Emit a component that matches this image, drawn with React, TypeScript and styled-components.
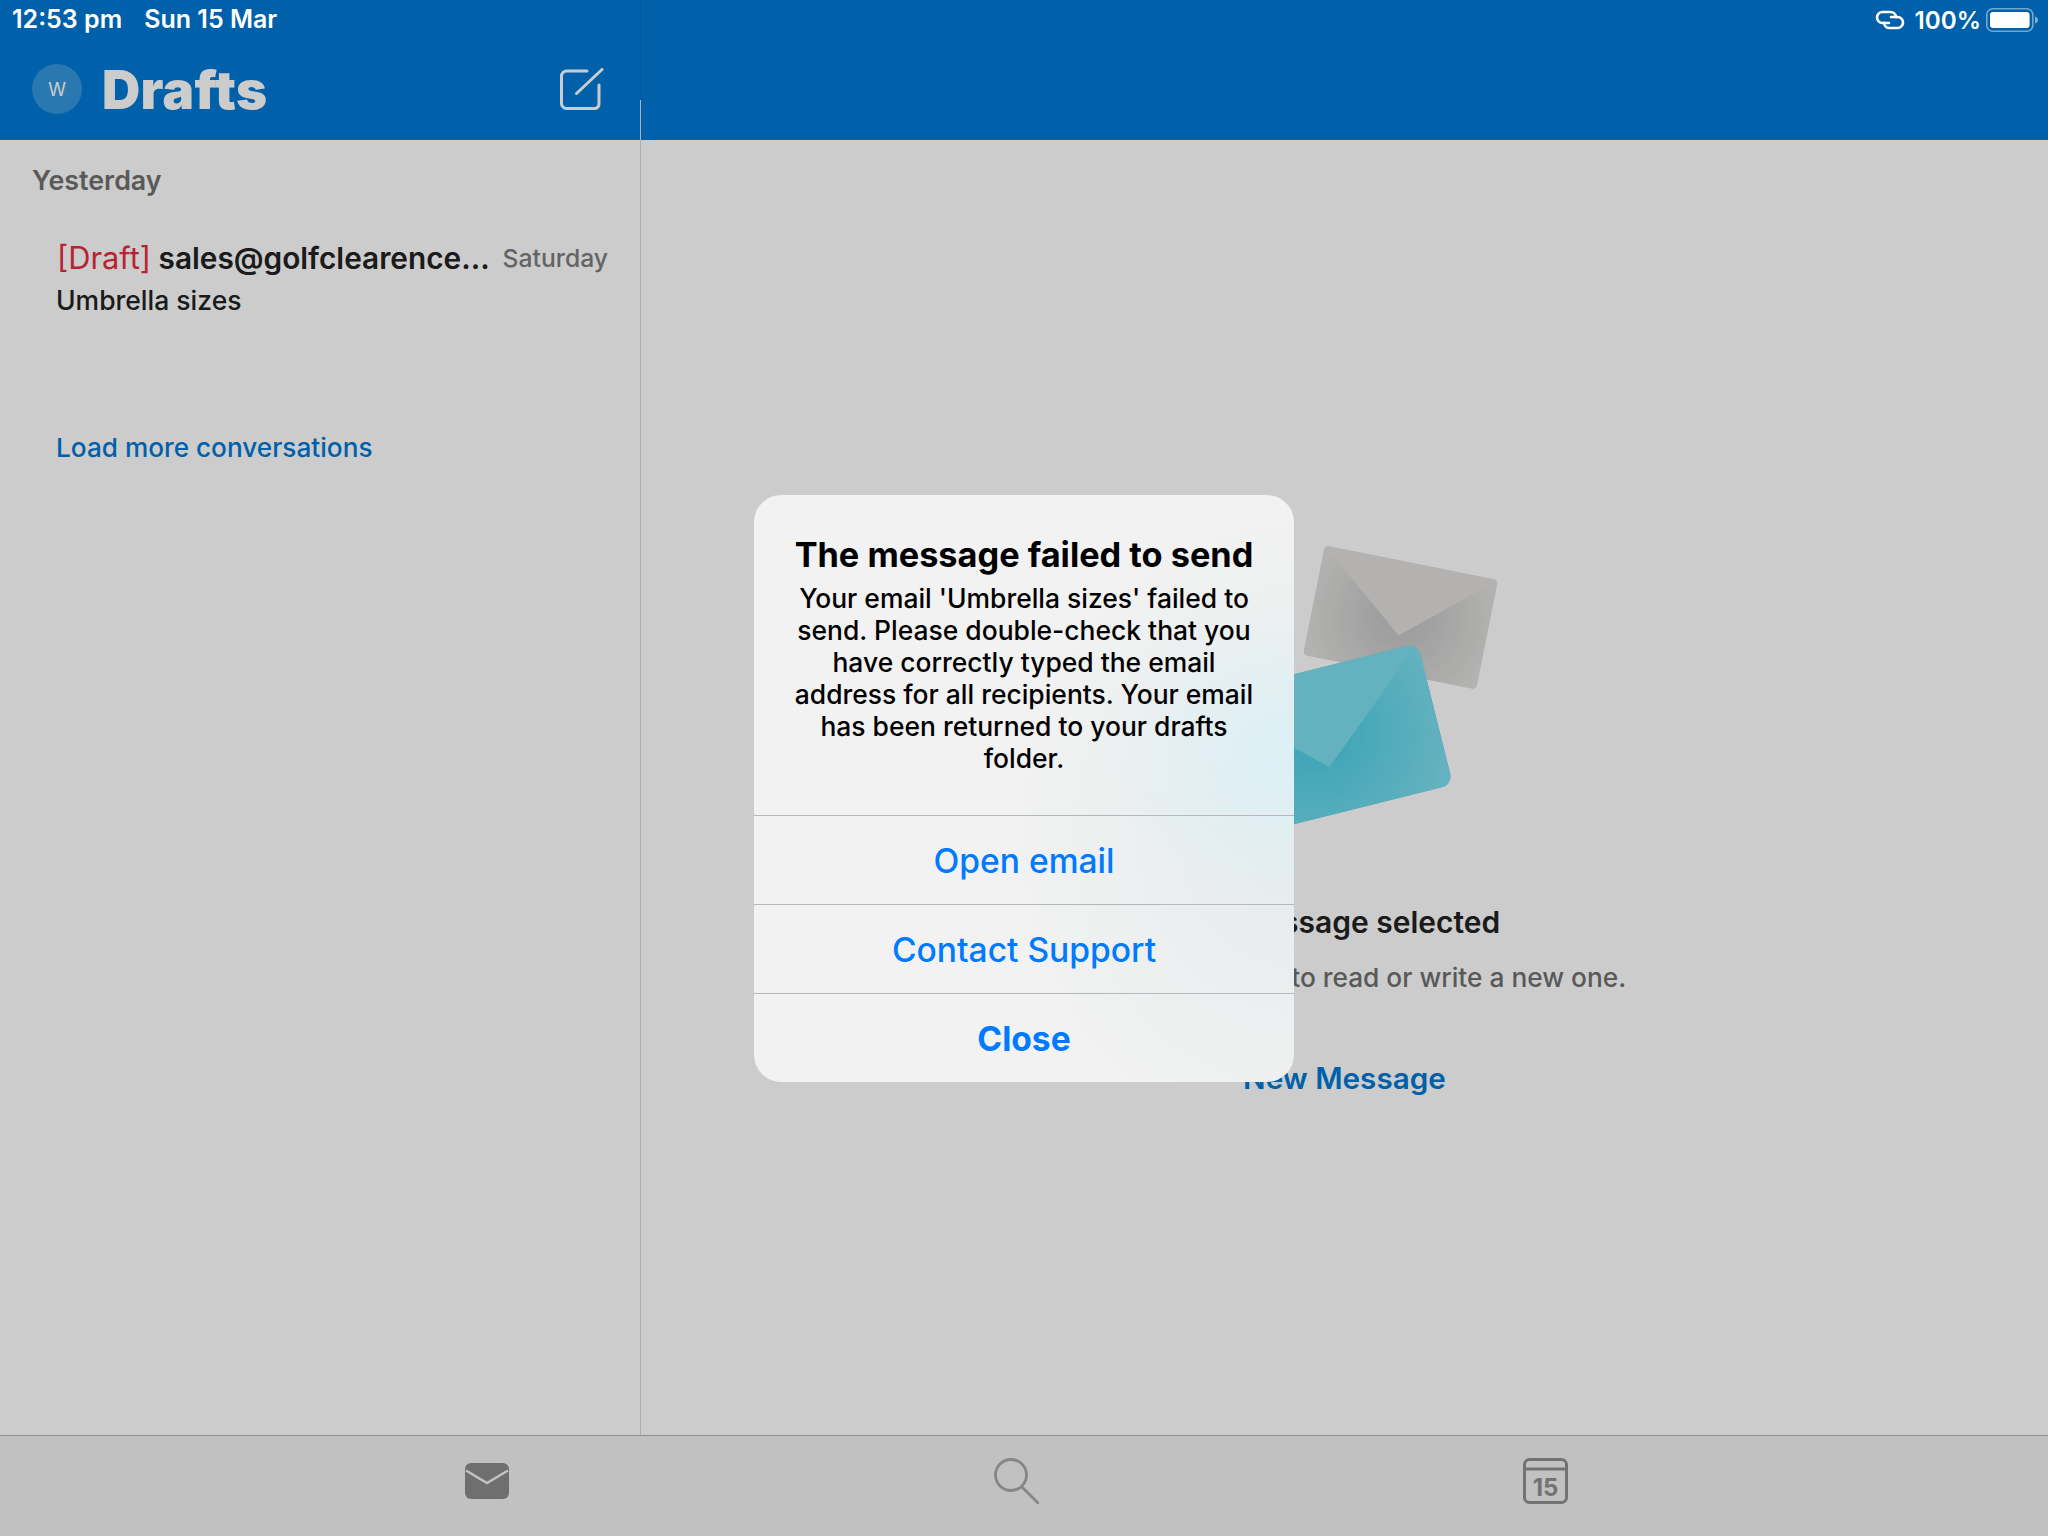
import React from 'react';
import styled, { createGlobalStyle } from 'styled-components';

const Global = createGlobalStyle`
  html, body { margin: 0; padding: 0; background: #fff; }
  body { font-family: Inter, "Noto Sans", "Liberation Sans", sans-serif; }
  #root { width: 2048px; height: 1536px; overflow: hidden; }
`;

const Page = styled.div`
  position: relative;
  width: 2048px;
  height: 1536px;
  display: flex;
  flex-direction: column;
  background: #fff;
  overflow: hidden;
`;

const StatusBar = styled.div`
  position: absolute;
  z-index: 30;
  top: 0;
  left: 0;
  right: 0;
  height: 40px;
  padding: 0 10px 0 12px;
  display: flex;
  align-items: flex-start;
  justify-content: space-between;
  color: #fff;
  font-size: 25px;
  font-weight: 600;
  line-height: 39px;
`;

const StatusLeft = styled.div`
  display: flex;
  gap: 22px;
`;

const StatusRight = styled.div`
  display: flex;
  align-items: center;
  height: 40px;
`;

const Percent = styled.span`
  margin: 0 5px 0 10px;
  font-size: 24.2px;
`;

const Main = styled.div`
  flex: 1;
  display: flex;
  min-height: 0;
`;

const Sidebar = styled.aside`
  width: 641px;
  flex: none;
  display: flex;
  flex-direction: column;
  border-right: 1px solid #dcdcdc;
  box-sizing: border-box;
`;

const SidebarHeader = styled.header`
  position: relative;
  height: 140px;
  box-sizing: border-box;
  margin-right: -1px;
  padding: 64px 36px 0 32px;
  background: #0078d4;
  border-right: 1px solid #006cbe;
  display: flex;
  align-items: flex-start;
  &::after {
    content: '';
    position: absolute;
    right: -1px;
    top: 100px;
    bottom: 0;
    width: 1px;
    background: #dcdcdc;
  }
`;

const Avatar = styled.div`
  width: 50px;
  height: 50px;
  flex: none;
  border-radius: 50%;
  background: #3596dd;
  color: #fff;
  font-size: 18px;
  font-weight: 400;
  display: flex;
  align-items: center;
  justify-content: center;
`;

const Title = styled.h1`
  flex: 1;
  margin: 1px 0 0 20px;
  color: #fff;
  font-size: 53px;
  font-weight: 900;
  letter-spacing: 0.3px;
  line-height: 50px;
`;

const ComposeButton = styled.div`
  width: 44px;
  height: 42px;
  margin-top: 4px;
  flex: none;
`;

const Section = styled.div`
  padding: 24px 25px 0 32px;
  color: #707070;
  font-size: 26.8px;
  font-weight: 600;
  line-height: 32px;
`;

const Conversation = styled.div`
  padding: 41.5px 32px 0 57px;
  display: flex;
  flex-direction: column;
`;

const ConversationTop = styled.div`
  display: flex;
  align-items: center;
  justify-content: space-between;
  line-height: 40px;
`;

const Sender = styled.span`
  color: #222;
  font-size: 29.8px;
  font-weight: 600;
  white-space: nowrap;
`;

const DraftTag = styled.span`
  color: #e62c3b;
  font-weight: 400;
  font-size: 30.8px;
`;

const DateText = styled.span`
  color: #7d7d7d;
  font-size: 24.7px;
  font-weight: 500;
`;

const Subject = styled.div`
  margin: 5px 0 0 -1px;
  color: #222;
  font-size: 26.5px;
  font-weight: 500;
  line-height: 34px;
`;

const LoadMore = styled.div`
  margin: 114.5px 0 0 56px;
  color: #0078d4;
  font-size: 26.2px;
  font-weight: 500;
  line-height: 34px;
`;

const DetailPane = styled.section`
  flex: 1;
  display: flex;
  flex-direction: column;
  align-items: center;
`;

const DetailHeader = styled.div`
  align-self: stretch;
  height: 140px;
  flex: none;
  background: #0078d4;
`;

const Illustration = styled.svg`
  display: block;
  width: 320px;
  height: 300px;
  margin-top: 400px;
  flex: none;
`;

const EmptyTitle = styled.div`
  margin-top: 62px;
  color: #222;
  font-size: 30px;
  font-weight: 600;
  line-height: 40px;
`;

const EmptyText = styled.div`
  margin-top: 18px;
  color: #707070;
  font-size: 26.3px;
  font-weight: 500;
  line-height: 36px;
`;

const NewMessage = styled.div`
  margin-top: 62px;
  color: #0078d4;
  font-size: 29.7px;
  font-weight: 600;
  line-height: 40px;
`;

const TabBar = styled.nav`
  height: 101px;
  flex: none;
  box-sizing: border-box;
  padding-left: 222px;
  background: #f2f2f2;
  border-top: 1px solid #b4b4b4;
  display: grid;
  grid-template-columns: repeat(3, 529.5px);
`;

const Tab = styled.div`
  display: flex;
  align-items: center;
  justify-content: center;
  padding-bottom: 11px;
`;

const Backdrop = styled.div`
  position: absolute;
  inset: 0;
  z-index: 20;
  padding-top: 41px;
  box-sizing: border-box;
  background: rgba(0, 0, 0, 0.2);
  display: flex;
  align-items: center;
  justify-content: center;
`;

const Alert = styled.div`
  width: 540px;
  border-radius: 27px;
  overflow: hidden;
  background:
    radial-gradient(190px 150px at 100% 262px, #dcf0f5 0%, rgba(220, 240, 245, 0.75) 35%, rgba(232, 240, 242, 0) 100%),
    radial-gradient(300px 340px at 100% 340px, rgba(228, 234, 236, 0.85) 0%, rgba(236, 238, 239, 0) 100%),
    #f2f2f2;
  text-align: center;
`;

const AlertContent = styled.div`
  padding: 39px 30px 41px;
`;

const AlertTitle = styled.h2`
  margin: 0 0 7px;
  color: #000;
  font-size: 34.3px;
  font-weight: 700;
  line-height: 41px;
`;

const AlertBody = styled.p`
  margin: 0;
  color: #000;
  font-size: 26.45px;
  font-weight: 500;
  line-height: 32px;
`;

const AlertButton = styled.div<{ $strong?: boolean }>`
  height: 88px;
  border-top: 1px solid #b5b8ba;
  display: flex;
  align-items: center;
  justify-content: center;
  color: #007aff;
  font-size: 33.6px;
  font-weight: ${(p) => (p.$strong ? 700 : 500)};
`;

const LinkIcon = () => (
  <svg width="30" height="20" viewBox="0 0 30 20" fill="none" stroke="#fff" strokeWidth="2.6" strokeLinecap="round">
    <path d="M14 13H7.5a5.5 5.5 0 0 1 0-11h8a5.5 5.5 0 0 1 5.5 5.2" />
    <path d="M16 7h6.5a5.5 5.5 0 0 1 0 11h-8A5.5 5.5 0 0 1 9 12.8" />
  </svg>
);

const BatteryIcon = () => (
  <svg width="52" height="24" viewBox="0 0 52 24">
    <rect x="0.8" y="0.8" width="46" height="22.4" rx="6" fill="none" stroke="#fff" strokeOpacity="0.45" strokeWidth="1.6" />
    <rect x="4" y="4" width="39.6" height="16" rx="3.2" fill="#fff" />
    <path d="M49 8.5c1.8.6 3 1.9 3 3.5s-1.2 2.9-3 3.5z" fill="#fff" fillOpacity="0.5" />
  </svg>
);

const ComposeIcon = () => (
  <svg width="44" height="42" viewBox="0 0 44 42" fill="none" stroke="#fff" strokeWidth="3" strokeLinecap="round" strokeLinejoin="round">
    <path d="M27 3H6.5a5 5 0 0 0-5 5v27.5a5 5 0 0 0 5 5H35a5 5 0 0 0 4-5V17" />
    <path d="M16.5 25.5 42 1.5" />
  </svg>
);

const MailIcon = () => (
  <svg width="44" height="36" viewBox="0 0 44 36">
    <rect x="0" y="0" width="44" height="36" rx="6" fill="#8b8b8b" />
    <path d="M1 7.5 22 20 43 7.5" fill="none" stroke="#f2f2f2" strokeWidth="2.6" />
  </svg>
);

const SearchIcon = () => (
  <svg width="45" height="46" viewBox="0 0 45 46" fill="none" stroke="#a8a8a8" strokeWidth="2.8" strokeLinecap="round">
    <circle cx="17" cy="17" r="15.5" />
    <path d="M28 29 44 45" />
  </svg>
);

const CalendarIcon = () => (
  <svg width="45" height="46" viewBox="0 0 45 46">
    <rect x="1.5" y="1.5" width="42" height="43" rx="5" fill="none" stroke="#8f8f8f" strokeWidth="3" />
    <path d="M1.5 11h42" stroke="#8f8f8f" strokeWidth="3" />
    <text x="22.5" y="37.5" textAnchor="middle" fontFamily="Inter, sans-serif" fontSize="24" fontWeight="700" fill="#8f8f8f">15</text>
  </svg>
);

const Envelopes = () => (
  <Illustration viewBox="1184 540 320 300">
    <defs>
      <radialGradient id="grayBody" gradientUnits="userSpaceOnUse" cx="0" cy="0" r="95">
        <stop offset="0" stopColor="#c4c4c4" />
        <stop offset="0.25" stopColor="#c8c8c8" />
        <stop offset="1" stopColor="#e0dfdd" />
      </radialGradient>
      <radialGradient id="tealBody" gradientUnits="userSpaceOnUse" cx="-10" cy="-10" r="130">
        <stop offset="0.2" stopColor="#52d0e6" />
        <stop offset="1" stopColor="#7ddeef" />
      </radialGradient>
      <clipPath id="grayClip">
        <rect x="-88.5" y="-56" width="177" height="112" rx="5" />
      </clipPath>
      <clipPath id="tealClip">
        <rect x="-112" y="-73" width="224" height="146" rx="12" />
      </clipPath>
    </defs>
    <g transform="translate(1399.5 617.5) rotate(11.3)" clipPath="url(#grayClip)">
      <rect x="-88.5" y="-56" width="177" height="112" fill="url(#grayBody)" />
      <path d="M-88.5 -56H88.5L1.6 18Z" fill="#e0dfdd" />
    </g>
    <g transform="translate(1326 741) rotate(-14)" clipPath="url(#tealClip)">
      <rect x="-112" y="-73" width="224" height="146" fill="url(#tealBody)" />
      <path d="M-112 -73H112L-3.9 25.8Z" fill="#7ddeef" />
    </g>
  </Illustration>
);

export default function App() {
  return (
    <Page>
      <Global />
      <StatusBar>
        <StatusLeft>
          <span>12:53 pm</span>
          <span>Sun 15 Mar</span>
        </StatusLeft>
        <StatusRight>
          <LinkIcon />
          <Percent>100%</Percent>
          <BatteryIcon />
        </StatusRight>
      </StatusBar>

      <Main>
        <Sidebar>
          <SidebarHeader>
            <Avatar>W</Avatar>
            <Title>Drafts</Title>
            <ComposeButton>
              <ComposeIcon />
            </ComposeButton>
          </SidebarHeader>
          <Section>Yesterday</Section>
          <Conversation>
            <ConversationTop>
              <Sender>
                <DraftTag>[Draft]</DraftTag> sales@golfclearence...
              </Sender>
              <DateText>Saturday</DateText>
            </ConversationTop>
            <Subject>Umbrella sizes</Subject>
          </Conversation>
          <LoadMore>Load more conversations</LoadMore>
        </Sidebar>
        <DetailPane>
          <DetailHeader />
          <Envelopes />
          <EmptyTitle>No message selected</EmptyTitle>
          <EmptyText>Select a message to read or write a new one.</EmptyText>
          <NewMessage>New Message</NewMessage>
        </DetailPane>
      </Main>

      <TabBar>
        <Tab><MailIcon /></Tab>
        <Tab><SearchIcon /></Tab>
        <Tab><CalendarIcon /></Tab>
      </TabBar>

      <Backdrop>
        <Alert>
          <AlertContent>
            <AlertTitle>The message failed to send</AlertTitle>
            <AlertBody>
              Your email 'Umbrella sizes' failed to send. Please double-check that you have correctly typed the email address for all recipients. Your email has been returned to your drafts folder.
            </AlertBody>
          </AlertContent>
          <AlertButton>Open email</AlertButton>
          <AlertButton>Contact Support</AlertButton>
          <AlertButton $strong>Close</AlertButton>
        </Alert>
      </Backdrop>
    </Page>
  );
}
